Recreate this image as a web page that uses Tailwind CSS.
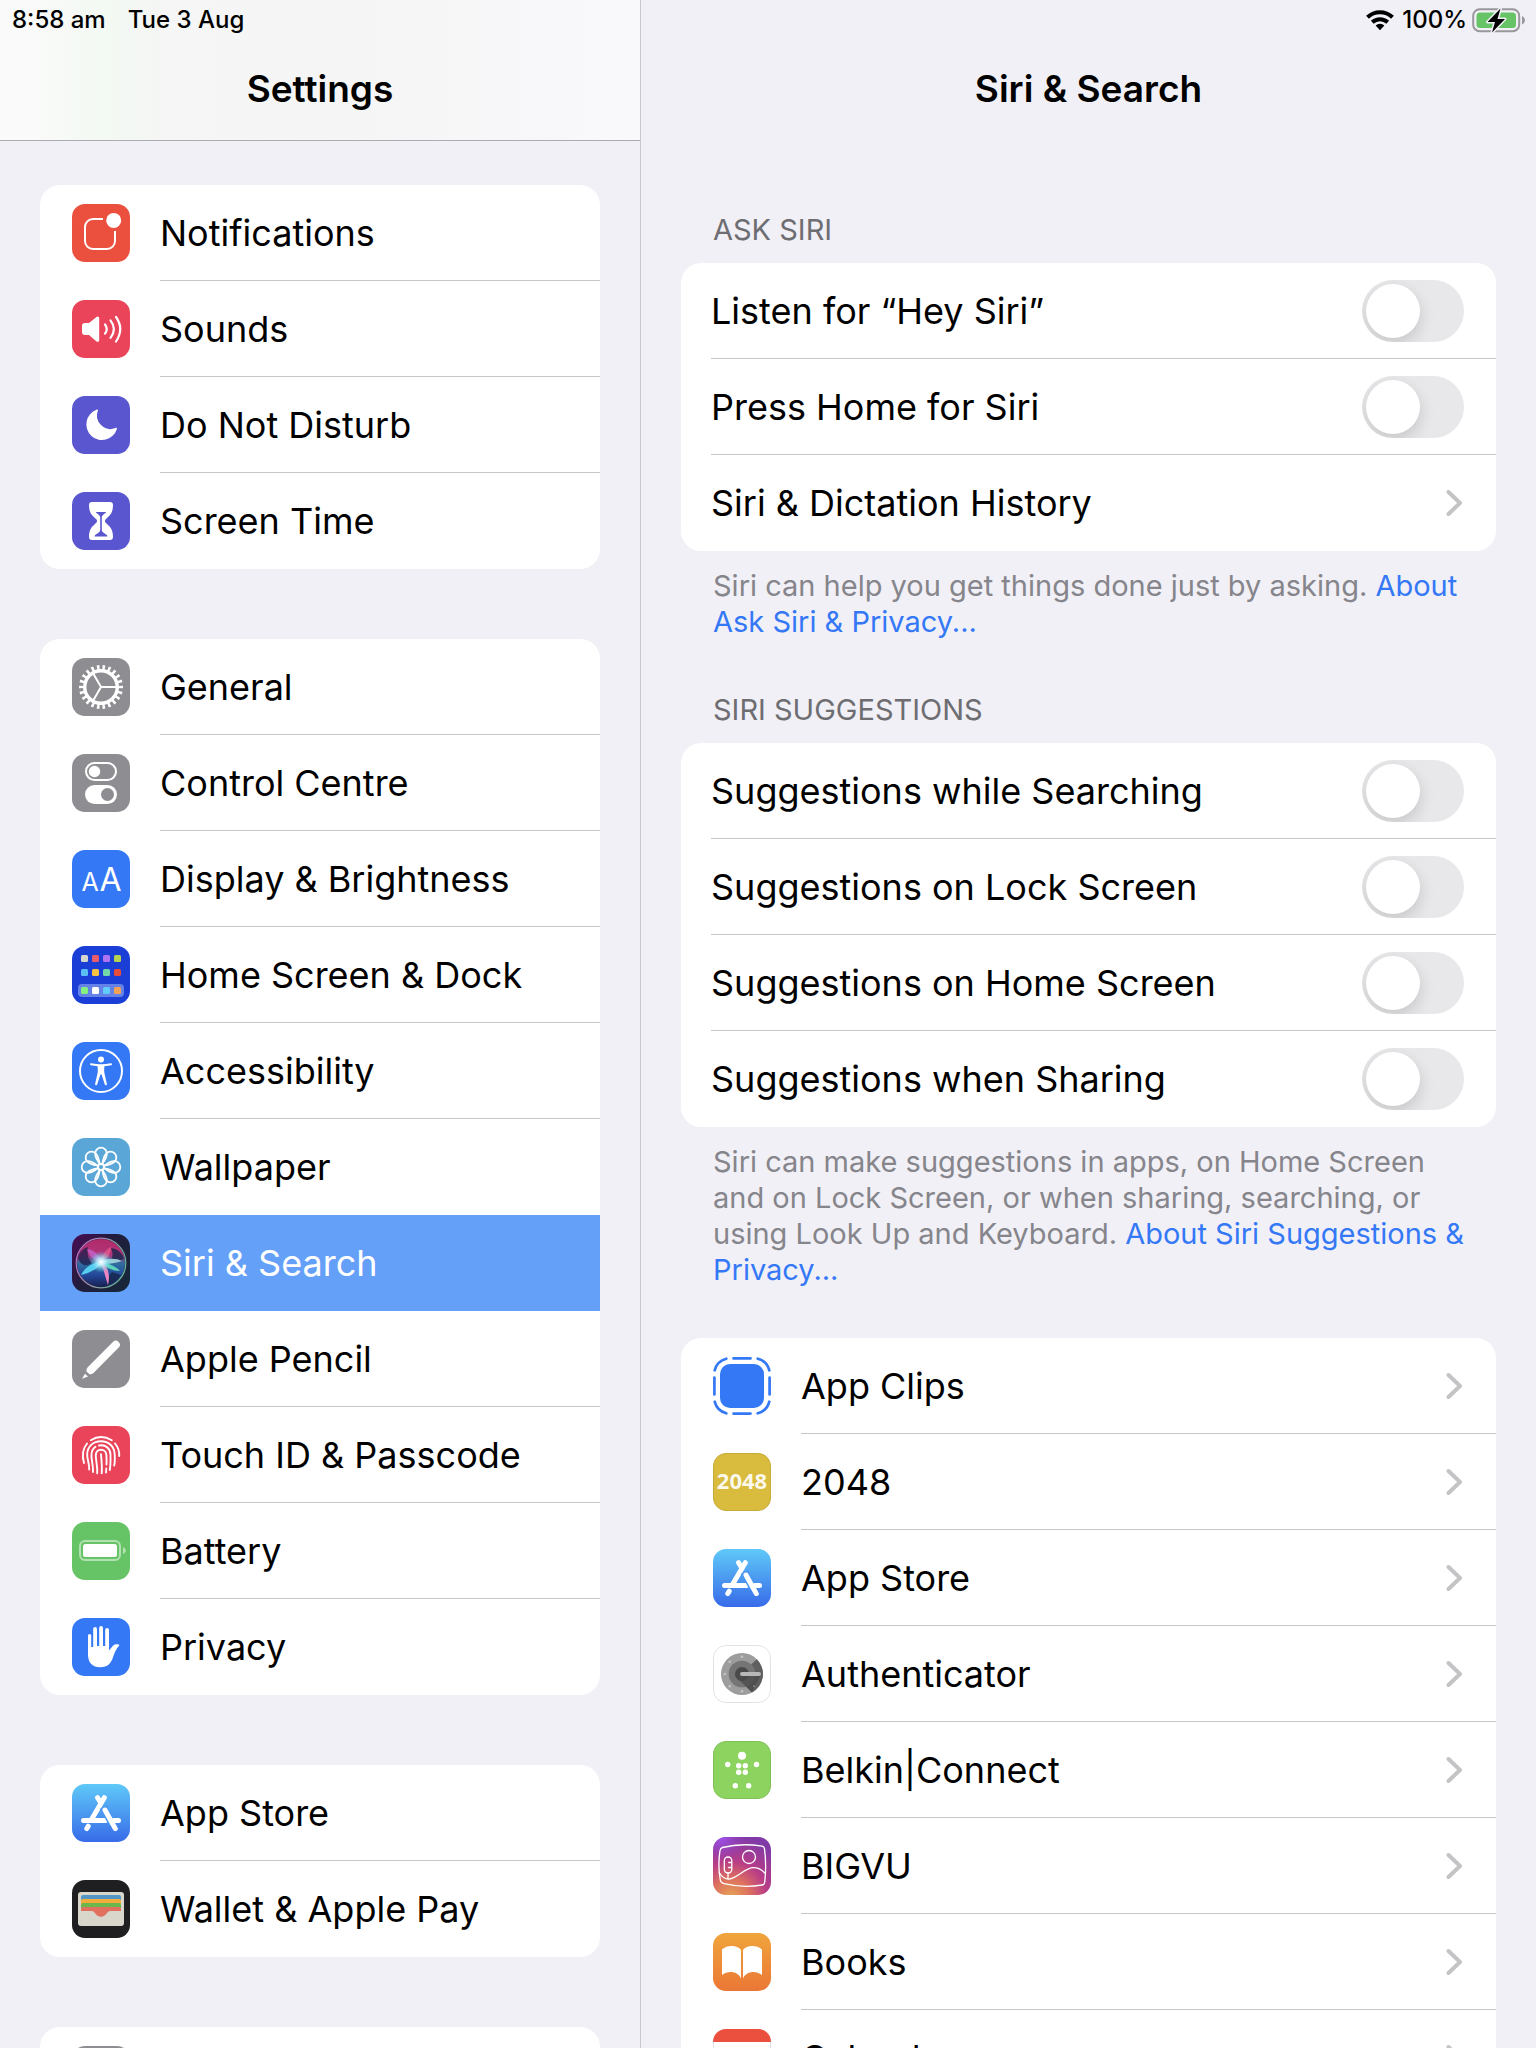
<!DOCTYPE html>
<html lang="en-AU">
<head>
  <meta charset="UTF-8" />
  <meta name="viewport" content="width=device-width, initial-scale=1.0" />
  <title>Settings - Siri &amp; Search</title>
  <script src="https://cdn.jsdelivr.net/npm/@tailwindcss/browser@4"></script>
</head>
<body class="h-screen flex overflow-hidden bg-[#f1f0f6] font-['Inter','Liberation_Sans',sans-serif] text-black">

  <!-- Shared icons -->
  <svg class="absolute size-0" aria-hidden="true">
    <defs>
      <linearGradient id="storeBg" x1="0" y1="0" x2="0" y2="1">
        <stop offset="0" stop-color="#5fc9f8" /><stop offset="1" stop-color="#386be9" />
      </linearGradient>
      <linearGradient id="booksBg" x1="0" y1="0" x2="0" y2="1">
        <stop offset="0" stop-color="#f0a53c" /><stop offset="1" stop-color="#ea7735" />
      </linearGradient>
      <radialGradient id="bigvuBg" gradientUnits="userSpaceOnUse" cx="18" cy="60" r="62">
        <stop offset="0" stop-color="#e6a356" /><stop offset=".3" stop-color="#dd705f" /><stop offset=".58" stop-color="#b83d86" /><stop offset="1" stop-color="#7f3aa8" />
      </radialGradient>
      <radialGradient id="bigvuGlow" gradientUnits="userSpaceOnUse" cx="8" cy="0" r="26">
        <stop offset="0" stop-color="#a154ee" /><stop offset="1" stop-color="#8c3fc0" stop-opacity="0" />
      </radialGradient>
      <linearGradient id="siriBg" x1="0" y1="0" x2="1" y2=".7">
        <stop offset="0" stop-color="#4a0c56" /><stop offset=".5" stop-color="#211d3c" /><stop offset="1" stop-color="#18263a" />
      </linearGradient>
      <linearGradient id="siriOrb" x1="0" y1="0" x2="0" y2="1">
        <stop offset="0" stop-color="#b02a68" /><stop offset=".32" stop-color="#b2347c" /><stop offset=".52" stop-color="#2f6da0" /><stop offset=".75" stop-color="#24489a" /><stop offset="1" stop-color="#172050" />
      </linearGradient>
      <linearGradient id="siriRing" x1="0" y1="0" x2="1" y2=".4">
        <stop offset="0" stop-color="#c06bc9" /><stop offset=".5" stop-color="#a08aa8" /><stop offset="1" stop-color="#69b19a" />
      </linearGradient>
      <radialGradient id="siriCore">
        <stop offset="0" stop-color="#fff" /><stop offset=".35" stop-color="#bff4ff" stop-opacity=".85" /><stop offset="1" stop-color="#4ac8e8" stop-opacity="0" />
      </radialGradient>
    </defs>
    <symbol id="chevron" viewBox="0 0 18 28">
      <path d="M2.5 3l11.5 11L2.5 25" fill="none" stroke="#c4c4c6" stroke-width="4" stroke-linecap="round" stroke-linejoin="round" />
    </symbol>
    <symbol id="appstore" viewBox="0 0 58 58">
      <rect width="58" height="58" rx="13" fill="url(#storeBg)" />
      <g fill="none" stroke="#fff" stroke-width="5" stroke-linecap="round">
        <path d="M11.5 36.5h22M32.3 13.7L19.5 35.5M25.6 13.7l3.4 5.5M14.8 44.6l1.4-2.4" />
        <path d="M31.2 23l9.3 16.5" stroke="#4c98f2" stroke-width="8" stroke-linecap="butt" />
        <path d="M42 36.5h4.5M33 26l10.3 18.6" />
      </g>
    </symbol>
  </svg>

  <!-- Sidebar -->
  <aside class="w-5/12 shrink-0 flex flex-col">
    <header class="shrink-0 h-[141px] border-b border-[#adacb1] bg-[linear-gradient(to_right,#fafafa_0%,#f9faf9_6%,#f3f9f3_16%,#f5f6f5_26%,#f5f5f6_50%,#f9f9fb_100%)]">
      <div class="h-10 flex items-center gap-[22px] pl-3 text-[24px] font-medium">
        <span>8:58 am</span>
        <span>Tue 3 Aug</span>
      </div>
      <h1 class="h-[98px] flex items-center justify-center text-[37px] font-semibold">Settings</h1>
    </header>

    <nav class="flex-1 flex flex-col gap-[70px] overflow-y-auto [scrollbar-width:none] pt-[44px] px-10 text-[36px]">

      <ul class="shrink-0 rounded-[20px] bg-white overflow-hidden">
        <li>
          <a href="#notifications" class="h-24 flex items-center gap-[30px] pl-8">
            <svg class="size-[58px] shrink-0" viewBox="0 0 58 58">
              <rect width="58" height="58" rx="13" fill="#eb4f3d" />
              <path d="M31 15H21a8 8 0 0 0-8 8v14a8 8 0 0 0 8 8h14a8 8 0 0 0 8-8V27" fill="none" stroke="#fff" stroke-width="2" />
              <circle cx="41.7" cy="16.4" r="7.5" fill="#fff" />
            </svg>
            <span class="flex-1 h-full flex items-center border-b border-[#c6c6c8]">Notifications</span>
          </a>
        </li>
        <li>
          <a href="#sounds" class="h-24 flex items-center gap-[30px] pl-8">
            <svg class="size-[58px] shrink-0" viewBox="0 0 58 58">
              <rect width="58" height="58" rx="13" fill="#ea445a" />
              <path d="M13 23h4l7.5-6a1.6 1.6 0 0 1 2.7 1.2v22a1.6 1.6 0 0 1-2.7 1.2L17 35h-4a3 3 0 0 1-3-3v-6a3 3 0 0 1 3-3z" fill="#fff" />
              <path d="M33 24.5q3.5 4.6 0 9.2M38.5 20.3q6.8 8.8 0 17.6M44 17q8.5 12 0 24.5" fill="none" stroke="#fff" stroke-width="2.2" stroke-linecap="round" />
            </svg>
            <span class="flex-1 h-full flex items-center border-b border-[#c6c6c8]">Sounds</span>
          </a>
        </li>
        <li>
          <a href="#dnd" class="h-24 flex items-center gap-[30px] pl-8">
            <svg class="size-[58px] shrink-0" viewBox="0 0 58 58">
              <rect width="58" height="58" rx="13" fill="#5956cf" />
              <path d="M24.5 13.8A15.6 15.6 0 1 0 44.8 33.2c.4-1-.3-1.6-1.3-1.2A13.5 13.5 0 0 1 25.9 14.6c.3-1.1-.3-1.5-1.4-.8z" fill="#fff" />
            </svg>
            <span class="flex-1 h-full flex items-center border-b border-[#c6c6c8]">Do Not Disturb</span>
          </a>
        </li>
        <li>
          <a href="#screentime" class="h-24 flex items-center gap-[30px] pl-8">
            <svg class="size-[58px] shrink-0" viewBox="0 0 58 58">
              <rect width="58" height="58" rx="13" fill="#5956cf" />
              <path d="M20 10h18a3 3 0 0 1 3 3c0 7-2.5 10-6 13-1.5 1.3-2 2-2 3s.5 1.7 2 3c3.5 3 6 6 6 13a3 3 0 0 1-3 3H20a3 3 0 0 1-3-3c0-7 2.5-10 6-13 1.5-1.3 2-2 2-3s-.5-1.7-2-3c-3.5-3-6-6-6-13a3 3 0 0 1 3-3z" fill="#fff" />
              <path d="M24 20h10c.3 1.2-4 2.8-4.2 5v13c0 3 5.7 4 5.7 6.500h-13c0-2.5 5.7-3.5 5.7-6.500V25c-.2-2.2-4.5-3.8-4.2-5z" fill="#5956cf" />
            </svg>
            <span class="flex-1 h-full flex items-center">Screen Time</span>
          </a>
        </li>
      </ul>

      <ul class="shrink-0 rounded-[20px] bg-white overflow-hidden">
        <li>
          <a href="#general" class="h-24 flex items-center gap-[30px] pl-8">
            <svg class="size-[58px] shrink-0" viewBox="0 0 58 58">
              <rect width="58" height="58" rx="13" fill="#8e8d92" />
              <g fill="none" stroke="#fff">
                <circle cx="29" cy="29" r="16.3" stroke-width="3.4" />
                <circle cx="29" cy="29" r="19.5" stroke-width="5" pathLength="44" stroke-dasharray=".9 1.1" stroke-dashoffset=".45" />
                <path d="M29 29h15M29 29l-7.5-13M29 29l-7.5 13" stroke-width="2" />
              </g>
            </svg>
            <span class="flex-1 h-full flex items-center border-b border-[#c6c6c8]">General</span>
          </a>
        </li>
        <li>
          <a href="#control-centre" class="h-24 flex items-center gap-[30px] pl-8">
            <svg class="size-[58px] shrink-0" viewBox="0 0 58 58">
              <rect width="58" height="58" rx="13" fill="#8e8d92" />
              <rect x="14" y="9" width="30" height="17" rx="8.5" fill="none" stroke="#fff" stroke-width="2" />
              <circle cx="22.5" cy="17.5" r="5.7" fill="#fff" />
              <rect x="13" y="31" width="32" height="19" rx="9.5" fill="#fff" />
              <circle cx="35.5" cy="40.5" r="6.5" fill="#8e8d92" />
            </svg>
            <span class="flex-1 h-full flex items-center border-b border-[#c6c6c8]">Control Centre</span>
          </a>
        </li>
        <li>
          <a href="#display" class="h-24 flex items-center gap-[30px] pl-8">
            <svg class="size-[58px] shrink-0" viewBox="0 0 58 58">
              <rect width="58" height="58" rx="13" fill="#3478f6" />
              <g fill="#fff" text-anchor="middle">
                <text x="18" y="41" font-size="25">A</text>
                <text x="38.5" y="41" font-size="32">A</text>
              </g>
            </svg>
            <span class="flex-1 h-full flex items-center border-b border-[#c6c6c8]">Display &amp; Brightness</span>
          </a>
        </li>
        <li>
          <a href="#home-screen" class="h-24 flex items-center gap-[30px] pl-8">
            <svg class="size-[58px] shrink-0" viewBox="0 0 58 58">
              <rect width="58" height="58" rx="13" fill="#1a3ed6" />
              <rect x="6" y="38" width="46" height="13" rx="4" fill="#6583e6" />
              <rect x="9" y="9" width="7" height="7" rx="1.5" fill="#d6d6cf" />
              <rect x="20" y="9" width="7" height="7" rx="1.5" fill="#ea5b6b" />
              <rect x="31" y="9" width="7" height="7" rx="1.5" fill="#b073f2" />
              <rect x="42" y="9" width="7" height="7" rx="1.5" fill="#b6d24f" />
              <rect x="9" y="23" width="7" height="7" rx="1.5" fill="#5bbff5" />
              <rect x="20" y="23" width="7" height="7" rx="1.5" fill="#f7c443" />
              <rect x="31" y="23" width="7" height="7" rx="1.5" fill="#72d6a8" />
              <rect x="42" y="23" width="7" height="7" rx="1.5" fill="#e84c3a" />
              <rect x="9" y="41" width="7" height="7" rx="1.5" fill="#85ef80" />
              <rect x="20" y="41" width="7" height="7" rx="1.5" fill="#fff" />
              <rect x="31" y="41" width="7" height="7" rx="1.5" fill="#5fccfa" />
              <rect x="42" y="41" width="7" height="7" rx="1.5" fill="#f5a156" />
            </svg>
            <span class="flex-1 h-full flex items-center border-b border-[#c6c6c8]">Home Screen &amp; Dock</span>
          </a>
        </li>
        <li>
          <a href="#accessibility" class="h-24 flex items-center gap-[30px] pl-8">
            <svg class="size-[58px] shrink-0" viewBox="0 0 58 58">
              <rect width="58" height="58" rx="13" fill="#3478f6" />
              <circle cx="29" cy="29" r="21" fill="none" stroke="#fff" stroke-width="2" />
              <circle cx="29" cy="17.4" r="3" fill="#fff" />
              <path d="M19 22.2q10 2.2 20 0" fill="none" stroke="#fff" stroke-width="2" stroke-linecap="round" />
              <path d="M25.2 23h7.6c-.6 2-.8 4.5-.5 7.5l2.6 11.4c.2 1.4-1.7 1.8-2.1.5l-3.2-10h-1.2l-3.2 10c-.4 1.3-2.3.9-2.1-.5l2.6-11.4c.3-3 .1-5.5-.5-7.5z" fill="#fff" />
            </svg>
            <span class="flex-1 h-full flex items-center border-b border-[#c6c6c8]">Accessibility</span>
          </a>
        </li>
        <li>
          <a href="#wallpaper" class="h-24 flex items-center gap-[30px] pl-8">
            <svg class="size-[58px] shrink-0" viewBox="0 0 58 58">
              <defs><path id="petal" d="M28.2 26.2C26 23.500 23.2 19 23.2 15.5a5.8 5.8 0 0 1 11.6 0c0 3.5-2.8 8-5 10.7" /></defs>
              <rect width="58" height="58" rx="13" fill="#5aa7d7" />
              <g fill="none" stroke="#fff" stroke-width="1.8">
                <circle cx="29" cy="29" r="3" />
                <use href="#petal" />
                <use href="#petal" transform="rotate(45 29 29)" />
                <use href="#petal" transform="rotate(90 29 29)" />
                <use href="#petal" transform="rotate(135 29 29)" />
                <use href="#petal" transform="rotate(180 29 29)" />
                <use href="#petal" transform="rotate(225 29 29)" />
                <use href="#petal" transform="rotate(270 29 29)" />
                <use href="#petal" transform="rotate(315 29 29)" />
              </g>
            </svg>
            <span class="flex-1 h-full flex items-center">Wallpaper</span>
          </a>
        </li>
        <li>
          <a href="#siri" aria-current="page" class="h-24 flex items-center gap-[30px] pl-8 bg-[#649ff8] text-white">
            <svg class="size-[58px] shrink-0" viewBox="0 0 58 58">
              <rect width="58" height="58" rx="13" fill="url(#siriBg)" />
              <circle cx="29" cy="29" r="24" fill="url(#siriOrb)" />
              <path d="M6 24C9 32 14 33 20 29c-4-4-5-9-4-16C10 15 7 19 6 24z" fill="#1b1d48" opacity=".75" />
              <path d="M52 24c-3 4-8 4-13 2 2-4 2-7 0-12 7 1 11 5 13 10zM36 50c-1-6 1-9 4-12l9 3c-3 5-7 8-13 9z" fill="#16264a" opacity=".8" />
              <path d="M15 15c7 1 12 5 14 13-7-1-12-6-14-13z" fill="#c665d0" opacity=".75" />
              <path d="M39 13c-6 3-9 8-10 15 6-2 10-8 10-15z" fill="#ee5f8d" opacity=".7" />
              <path d="M29 27c8-3 15-3 21 0-6 2-12 3-19 3z" fill="#a4dbe0" opacity=".9" />
              <path d="M30 28c8 2 15 5 18 9-7 0-13-3-17-7z" fill="#5fe0bd" opacity=".9" />
              <path d="M29 28c-9 1-16 5-20 13 9-2 15-6 21-11z" fill="#56d4f2" opacity=".95" />
              <path d="M28 29c4 6 5 13 8 22 2-8 1-15-4-22z" fill="#ec86c0" />
              <circle cx="29" cy="28" r="11" fill="url(#siriCore)" />
              <circle cx="29" cy="29" r="24.8" fill="none" stroke="url(#siriRing)" stroke-width="1.2" />
            </svg>
            <span class="flex-1 h-full flex items-center">Siri &amp; Search</span>
          </a>
        </li>
        <li>
          <a href="#pencil" class="h-24 flex items-center gap-[30px] pl-8">
            <svg class="size-[58px] shrink-0" viewBox="0 0 58 58">
              <rect width="58" height="58" rx="13" fill="#8e8d92" />
              <path d="M40.9 12a4 4 0 0 1 5.8 5.6L21.5 43q-1.5 1.5-4 1.3l-3-2.8q-.4-2.6 1-4zM13 43.8l3 2.6-6 2.4z" fill="#fff" />
            </svg>
            <span class="flex-1 h-full flex items-center border-b border-[#c6c6c8]">Apple Pencil</span>
          </a>
        </li>
        <li>
          <a href="#touch-id" class="h-24 flex items-center gap-[30px] pl-8">
            <svg class="size-[58px] shrink-0" viewBox="0 0 58 58">
              <rect width="58" height="58" rx="13" fill="#ea445a" />
              <path d="M18.8 14.3Q29 7.8 39.8 14.3M15 17.5C10.5 23 10 30 12 37M43 17.5C46 21 47.5 25 47.2 30M17.2 43.5C17.5 36 14.8 34 15.2 28 15.5 20.5 21 15.3 29 15.3c8 0 13.5 5.5 13.7 13.2.2 4 .2 8-.5 11M21 46c.5-7-2-12-1.5-18 .3-3.5 1.8-5.7 4-7.2M27 19.5c7-1.4 11.4 3.5 11.5 9 .1 5 .2 10-.7 15.5M25.2 47.3c.5-7-1.5-13-1.4-18.3.1-3 2.2-5.2 5.2-5.2s5.2 2.2 5.4 5.2c.1 3 .3 6 .1 9.5M34.3 42.5l-.3 4M29.7 47.3c.5-7 0-12-.7-19" fill="none" stroke="#fff" stroke-width="1.9" stroke-linecap="round" />
            </svg>
            <span class="flex-1 h-full flex items-center border-b border-[#c6c6c8]">Touch ID &amp; Passcode</span>
          </a>
        </li>
        <li>
          <a href="#battery" class="h-24 flex items-center gap-[30px] pl-8">
            <svg class="size-[58px] shrink-0" viewBox="0 0 58 58">
              <rect width="58" height="58" rx="13" fill="#67c466" />
              <rect x="8" y="19" width="40" height="19" rx="5" fill="none" stroke="#b3e1b2" stroke-width="2" />
              <rect x="11" y="22" width="34" height="13" rx="2.5" fill="#fff" />
              <path d="M51 25q3 1.5 3 3.5t-3 3.5z" fill="#b3e1b2" />
            </svg>
            <span class="flex-1 h-full flex items-center border-b border-[#c6c6c8]">Battery</span>
          </a>
        </li>
        <li>
          <a href="#privacy" class="h-24 flex items-center gap-[30px] pl-8">
            <svg class="size-[58px] shrink-0" viewBox="0 0 58 58">
              <rect width="58" height="58" rx="13" fill="#3478f6" />
              <path d="M16 17.5a1.6 1.6 0 0 1 3.2 0V29h2V11a1.9 1.9 0 0 1 3.8 0v17h2.2V10a1.9 1.9 0 0 1 3.8 0v18h2.2V12a1.9 1.9 0 0 1 3.8 0v20.5l4-4.8c1.5-1.6 4-1.8 5.8-1.2.6.2.6.7.2 1.2-3 3-4.4 7-6 11.5-2 6-5 10-13 10-8.5 0-12-5.5-12-13z" fill="#fff" />
            </svg>
            <span class="flex-1 h-full flex items-center">Privacy</span>
          </a>
        </li>
      </ul>

      <ul class="shrink-0 rounded-[20px] bg-white overflow-hidden">
        <li>
          <a href="#app-store" class="h-24 flex items-center gap-[30px] pl-8">
            <svg class="size-[58px] shrink-0"><use href="#appstore" /></svg>
            <span class="flex-1 h-full flex items-center border-b border-[#c6c6c8]">App Store</span>
          </a>
        </li>
        <li>
          <a href="#wallet" class="h-24 flex items-center gap-[30px] pl-8">
            <svg class="size-[58px] shrink-0" viewBox="0 0 58 58">
              <rect width="58" height="58" rx="13" fill="#1f1f21" />
              <rect x="6" y="12" width="46" height="34" rx="3" fill="#d9d6cc" />
              <path d="M9 20v-3a2 2 0 0 1 2-2h36a2 2 0 0 1 2 2v3z" fill="#5396c4" />
              <path d="M9 24v-3a2 2 0 0 1 2-2h36a2 2 0 0 1 2 2v3z" fill="#f2ad3c" />
              <path d="M9 28v-3a2 2 0 0 1 2-2h36a2 2 0 0 1 2 2v3z" fill="#6bb74c" />
              <path d="M9 31v-2a2 2 0 0 1 2-2h36a2 2 0 0 1 2 2v2H38c-3 0-3.5 5.7-9 5.7S23 31 20 31z" fill="#e1715f" />
            </svg>
            <span class="flex-1 h-full flex items-center">Wallet &amp; Apple Pay</span>
          </a>
        </li>
      </ul>

      <ul class="shrink-0 rounded-[20px] bg-white overflow-hidden">
        <li>
          <a href="#passwords" class="h-24 flex items-center gap-[30px] pl-8">
            <svg class="size-[58px] shrink-0" viewBox="0 0 58 58">
              <rect width="58" height="58" rx="13" fill="#8e8d92" />
              <circle cx="29" cy="20" r="8" fill="none" stroke="#fff" stroke-width="4" />
              <path d="M29 28v20M29 40h6" fill="none" stroke="#fff" stroke-width="4" />
            </svg>
            <span class="flex-1 h-full flex items-center">Passwords</span>
          </a>
        </li>
      </ul>
    </nav>
  </aside>

  <!-- Detail pane -->
  <main class="flex-1 min-w-0 flex flex-col border-l border-[#c9c8cd]">
    <header class="shrink-0 h-[141px]">
      <div class="h-10 flex items-center justify-end pr-[10px] text-[24px] font-medium">
        <svg class="w-[28px] h-[22px] mr-2" viewBox="0 0 28 22">
          <g fill="none" stroke="#000" stroke-width="4">
            <path d="M1.5 8.2a18 18 0 0 1 25 0" />
            <path d="M6.3 13.2a11.2 11.2 0 0 1 15.4 0" />
          </g>
          <path d="M9.6 16.6a6.4 6.4 0 0 1 8.8 0L14 21.2z" />
        </svg>
        <span>100%</span>
        <svg class="w-[54px] h-[28px] ml-[5px]" viewBox="0 0 54 28">
          <rect x="1.2" y="3.2" width="46" height="22" rx="6.5" fill="none" stroke="#98979c" stroke-width="2" />
          <rect x="4.5" y="6.5" width="39.5" height="15.5" rx="3.5" fill="#67c466" />
          <path d="M50 10q3 1.5 3 4.2T50 18.5z" fill="#98979c" />
          <path d="M28.5 2.5L15.5 16h7.5l-3 10.5L33 13h-7.5z" stroke="#f1f0f6" stroke-width="3" stroke-linejoin="round" paint-order="stroke" />
        </svg>
      </div>
      <h2 class="h-[98px] flex items-center justify-center text-[37px] font-semibold">Siri &amp; Search</h2>
    </header>

    <div class="flex-1 overflow-y-auto [scrollbar-width:none] px-10 pt-[71px] text-[36px]">

      <h3 class="pl-8 mb-[15px] text-[29px] leading-[36px] text-[#6d6d72]">ASK SIRI</h3>
      <div class="rounded-[20px] bg-white pl-[30px]">
        <label class="h-24 flex items-center justify-between pr-8 border-b border-[#c6c6c8]">
          Listen for “Hey Siri”
          <input type="checkbox" role="switch" class="appearance-none w-[102px] h-[62px] p-1 rounded-full bg-[#e8e8ea] checked:bg-[#67c466] overflow-hidden before:block before:size-[54px] before:rounded-full before:bg-white before:shadow-[0_6px_16px_rgba(0,0,0,0.15)] checked:before:translate-x-10" />
        </label>
        <label class="h-24 flex items-center justify-between pr-8 border-b border-[#c6c6c8]">
          Press Home for Siri
          <input type="checkbox" role="switch" class="appearance-none w-[102px] h-[62px] p-1 rounded-full bg-[#e8e8ea] checked:bg-[#67c466] overflow-hidden before:block before:size-[54px] before:rounded-full before:bg-white before:shadow-[0_6px_16px_rgba(0,0,0,0.15)] checked:before:translate-x-10" />
        </label>
        <a href="#history" class="h-24 flex items-center justify-between pr-8">
          Siri &amp; Dictation History
          <svg class="w-[18px] h-[28px]"><use href="#chevron" /></svg>
        </a>
      </div>
      <p class="pt-[17px] pl-8 pr-6 text-[29px] leading-[36px] text-[#85858b]">Siri can help you get things done just by asking. <a href="#about-siri" class="text-[#3478f6]">About Ask Siri &amp; Privacy...</a></p>

      <h3 class="pl-8 mt-[52px] mb-[15px] text-[29px] leading-[36px] text-[#6d6d72]">SIRI SUGGESTIONS</h3>
      <div class="rounded-[20px] bg-white pl-[30px]">
        <label class="h-24 flex items-center justify-between pr-8 border-b border-[#c6c6c8]">
          Suggestions while Searching
          <input type="checkbox" role="switch" class="appearance-none w-[102px] h-[62px] p-1 rounded-full bg-[#e8e8ea] checked:bg-[#67c466] overflow-hidden before:block before:size-[54px] before:rounded-full before:bg-white before:shadow-[0_6px_16px_rgba(0,0,0,0.15)] checked:before:translate-x-10" />
        </label>
        <label class="h-24 flex items-center justify-between pr-8 border-b border-[#c6c6c8]">
          Suggestions on Lock Screen
          <input type="checkbox" role="switch" class="appearance-none w-[102px] h-[62px] p-1 rounded-full bg-[#e8e8ea] checked:bg-[#67c466] overflow-hidden before:block before:size-[54px] before:rounded-full before:bg-white before:shadow-[0_6px_16px_rgba(0,0,0,0.15)] checked:before:translate-x-10" />
        </label>
        <label class="h-24 flex items-center justify-between pr-8 border-b border-[#c6c6c8]">
          Suggestions on Home Screen
          <input type="checkbox" role="switch" class="appearance-none w-[102px] h-[62px] p-1 rounded-full bg-[#e8e8ea] checked:bg-[#67c466] overflow-hidden before:block before:size-[54px] before:rounded-full before:bg-white before:shadow-[0_6px_16px_rgba(0,0,0,0.15)] checked:before:translate-x-10" />
        </label>
        <label class="h-24 flex items-center justify-between pr-8">
          Suggestions when Sharing
          <input type="checkbox" role="switch" class="appearance-none w-[102px] h-[62px] p-1 rounded-full bg-[#e8e8ea] checked:bg-[#67c466] overflow-hidden before:block before:size-[54px] before:rounded-full before:bg-white before:shadow-[0_6px_16px_rgba(0,0,0,0.15)] checked:before:translate-x-10" />
        </label>
      </div>
      <p class="pt-[17px] pl-8 pr-6 text-[29px] leading-[36px] text-[#85858b]">Siri can make suggestions in apps, on Home Screen and on Lock Screen, or when sharing, searching, or using Look Up and Keyboard. <a href="#about-suggestions" class="text-[#3478f6]">About Siri Suggestions &amp; Privacy...</a></p>

      <!-- Apps -->
      <ul class="mt-[50px] rounded-[20px] bg-white overflow-hidden">
        <li>
          <a href="#app-clips" class="h-24 flex items-center gap-[30px] pl-8">
            <svg class="size-[58px] shrink-0" viewBox="0 0 58 58">
              <rect x="7" y="7" width="44" height="44" rx="10" fill="#3478f6" />
              <path d="M20.5 1.4h17M20.5 56.6h17M1.4 20.5v17M56.6 20.5v17M13.3 1.7A16 16 0 0 0 1.7 13.3M44.7 1.7A16 16 0 0 1 56.3 13.3M13.3 56.3A16 16 0 0 1 1.7 44.7M44.7 56.3A16 16 0 0 0 56.3 44.7" fill="none" stroke="#3478f6" stroke-width="2.7" stroke-linecap="round" />
            </svg>
            <span class="flex-1 h-full flex items-center justify-between pr-8 border-b border-[#c6c6c8]">App Clips <svg class="w-[18px] h-[28px]"><use href="#chevron" /></svg></span>
          </a>
        </li>
        <li>
          <a href="#2048" class="h-24 flex items-center gap-[30px] pl-8">
            <svg class="size-[58px] shrink-0" viewBox="0 0 58 58">
              <rect x=".5" y=".5" width="57" height="57" rx="12.5" fill="#d9bb3d" stroke="#c7ab38" />
              <text x="29" y="36" font-family="Open Sans" font-weight="700" font-size="22" fill="#fbf8ec" text-anchor="middle">2048</text>
            </svg>
            <span class="flex-1 h-full flex items-center justify-between pr-8 border-b border-[#c6c6c8]">2048 <svg class="w-[18px] h-[28px]"><use href="#chevron" /></svg></span>
          </a>
        </li>
        <li>
          <a href="#app-store-siri" class="h-24 flex items-center gap-[30px] pl-8">
            <svg class="size-[58px] shrink-0"><use href="#appstore" /></svg>
            <span class="flex-1 h-full flex items-center justify-between pr-8 border-b border-[#c6c6c8]">App Store <svg class="w-[18px] h-[28px]"><use href="#chevron" /></svg></span>
          </a>
        </li>
        <li>
          <a href="#authenticator" class="h-24 flex items-center gap-[30px] pl-8">
            <svg class="size-[58px] shrink-0" viewBox="0 0 58 58">
              <rect x=".5" y=".5" width="57" height="57" rx="12.5" fill="#fff" stroke="#e3e3e5" />
              <circle cx="29" cy="29" r="21" fill="#9d9d9d" />
              <path d="M43.8 14.2A21 21 0 0 1 39 47.5L27 35l10-14.5z" fill="#5f5f5f" />
              <circle cx="29" cy="29" r="13.3" fill="#757575" />
              <path d="M29 29h19l-9 18.5L25 34z" fill="#4a4a4a" opacity=".75" />
              <circle cx="29" cy="29" r="7" fill="#4a4a4a" />
              <rect x="27" y="27" width="21" height="4" rx="2" fill="#b8b8b8" />
              <g fill="#c4c4c4">
                <circle cx="29" cy="11.7" r="1.3" /><circle cx="16.7" cy="16.7" r="1.3" /><circle cx="11.7" cy="29" r="1.3" /><circle cx="16.7" cy="41.3" r="1.3" /><circle cx="29" cy="46.3" r="1.3" />
              </g>
              <circle cx="41.3" cy="41.3" r="1.3" fill="#7a7a7a" />
            </svg>
            <span class="flex-1 h-full flex items-center justify-between pr-8 border-b border-[#c6c6c8]">Authenticator <svg class="w-[18px] h-[28px]"><use href="#chevron" /></svg></span>
          </a>
        </li>
        <li>
          <a href="#belkin" class="h-24 flex items-center gap-[30px] pl-8">
            <svg class="size-[58px] shrink-0" viewBox="0 0 58 58">
              <rect x=".5" y=".5" width="57" height="57" rx="12.5" fill="#8dd35f" stroke="#80c156" />
              <g fill="#fff">
                <circle cx="29" cy="14.7" r="4" />
                <circle cx="14.7" cy="23.5" r="2.7" /><circle cx="43.5" cy="23.5" r="2.7" />
                <circle cx="25.7" cy="24.7" r="2.7" /><circle cx="32.3" cy="24.7" r="2.7" />
                <circle cx="25.7" cy="31.3" r="2.7" /><circle cx="32.3" cy="31.3" r="2.7" />
                <circle cx="22.3" cy="44.7" r="2.7" /><circle cx="35.7" cy="44.7" r="2.7" />
              </g>
            </svg>
            <span class="flex-1 h-full flex items-center justify-between pr-8 border-b border-[#c6c6c8]">Belkin|Connect <svg class="w-[18px] h-[28px]"><use href="#chevron" /></svg></span>
          </a>
        </li>
        <li>
          <a href="#bigvu" class="h-24 flex items-center gap-[30px] pl-8">
            <svg class="size-[58px] shrink-0" viewBox="0 0 58 58">
              <rect width="58" height="58" rx="13" fill="url(#bigvuBg)" />
              <rect width="58" height="58" rx="13" fill="url(#bigvuGlow)" />
              <g fill="none" stroke="#fff" stroke-width="1.3" stroke-linecap="round">
                <path d="M9.5 10.5C22 7.3 37 7.2 49 9.2q2.2.4 2.5 2.7c1.5 11 1.5 22 .2 33.5q-.3 2.2-2.5 2.6c-12 2-25 1.9-38-1.3q-3.5-.8-3.9-3.7c-1.8-10-1.8-20-.3-29.5q.4-2.5 2.5-3z" />
                <circle cx="36" cy="20" r="6.5" />
                <rect x="11.3" y="20" width="7.5" height="16" rx="3.7" />
                <path d="M15.7 25.5h2.5M15.7 30.5h2.5M15 36v5.5M6.2 35.5c3 5 6.5 7 10.5 6.5C25 40.5 32 30.7 40.5 30.7c5 0 8.5 2 11.5 5.6" />
              </g>
            </svg>
            <span class="flex-1 h-full flex items-center justify-between pr-8 border-b border-[#c6c6c8]">BIGVU <svg class="w-[18px] h-[28px]"><use href="#chevron" /></svg></span>
          </a>
        </li>
        <li>
          <a href="#books" class="h-24 flex items-center gap-[30px] pl-8">
            <svg class="size-[58px] shrink-0" viewBox="0 0 58 58">
              <rect width="58" height="58" rx="13" fill="url(#booksBg)" />
              <path d="M9 16.5C14 11.8 24.5 11.8 28 17v28.5c-3.5-7.5-13-8-19-3.5zM49 16.5C44 11.8 33.5 11.8 30 17v28.5c3.5-7.5 13-8 19-3.5z" fill="#fff" />
            </svg>
            <span class="flex-1 h-full flex items-center justify-between pr-8 border-b border-[#c6c6c8]">Books <svg class="w-[18px] h-[28px]"><use href="#chevron" /></svg></span>
          </a>
        </li>
        <li>
          <a href="#calendar" class="h-24 flex items-center gap-[30px] pl-8">
            <svg class="size-[58px] shrink-0" viewBox="0 0 58 58">
              <rect x=".5" y=".5" width="57" height="57" rx="12.5" fill="#fff" stroke="#e3e3e5" />
              <path d="M0 13A13 13 0 0 1 13 0h32a13 13 0 0 1 13 13z" fill="#eb4f3d" />
            </svg>
            <span class="flex-1 h-full flex items-center justify-between pr-8">Calendar <svg class="w-[18px] h-[28px]"><use href="#chevron" /></svg></span>
          </a>
        </li>
      </ul>
    </div>
  </main>

</body>
</html>
